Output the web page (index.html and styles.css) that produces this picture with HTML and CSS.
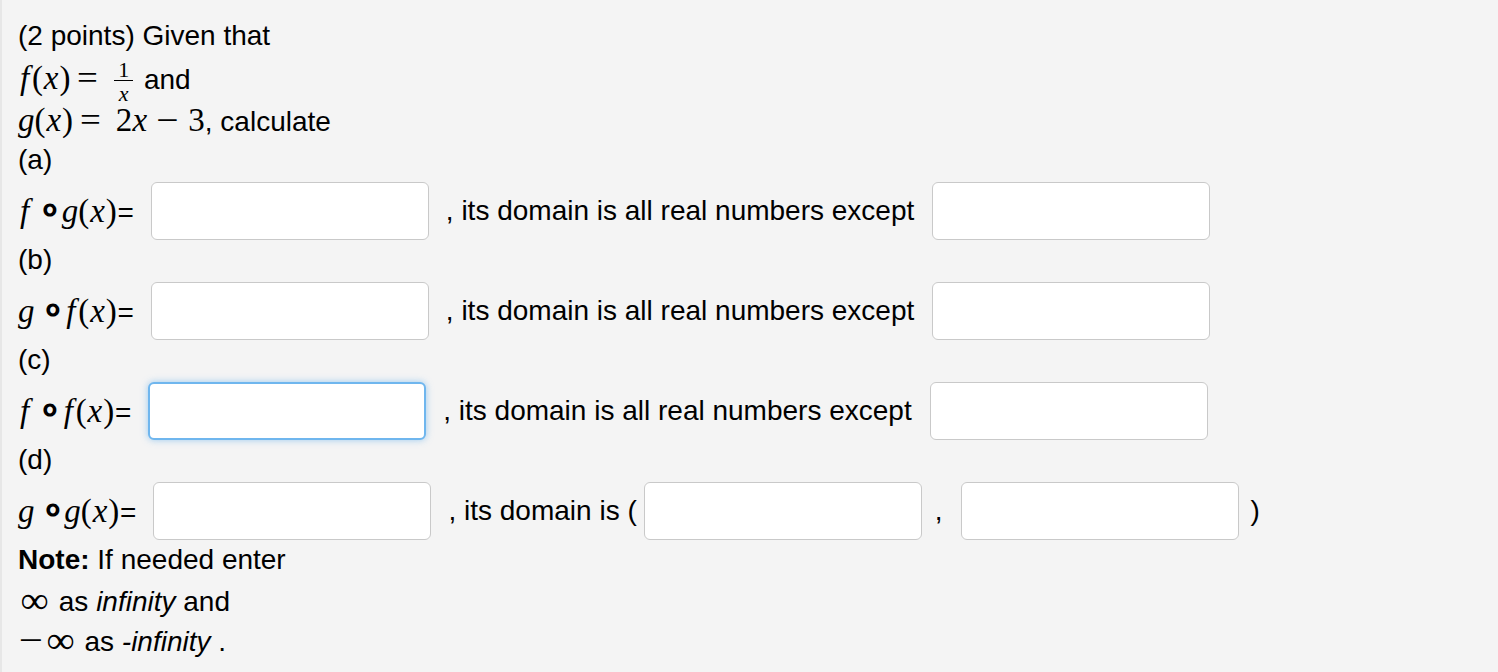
FILE: index.html
```html
<!DOCTYPE html>
<html lang="en">
<head>
<meta charset="utf-8">
<title>Composition of functions</title>
<link rel="stylesheet" href="styles.css">
</head>
<body>
<div class="page">
  <div class="line">(2 points) Given that</div>
  <div class="line l2"><span class="math"><i class="mi f">f</i><span class="mo p">(</span><i class="mi x">x</i><span class="mo p">)</span><span class="mo rel">=</span><span class="frac"><span class="num">1</span><i class="den">x</i></span></span> and</div>
  <div class="line"><span class="math"><i class="mi g">g</i><span class="mo p">(</span><i class="mi x">x</i><span class="mo p">)</span><span class="mo rel">=</span><span class="mo d">2</span><i class="mi x">x</i><span class="mo bin">−</span><span class="mo d">3</span></span>, calculate</div>

  <div class="line">(a)</div>
  <div class="row">
    <span class="lbl"><span class="math"><i class="mi f">f</i><span class="mo circ">∘</span><i class="mi g">g</i><span class="mo p">(</span><i class="mi x">x</i><span class="mo p">)</span></span>=</span>
    <input class="ans ans-first" type="text">
    <span class="txt">, its domain is all real numbers except</span>
    <input class="ans ans-end" type="text">
  </div>

  <div class="line">(b)</div>
  <div class="row">
    <span class="lbl"><span class="math"><i class="mi g">g</i><span class="mo circ">∘</span><i class="mi f">f</i><span class="mo p">(</span><i class="mi x">x</i><span class="mo p">)</span></span>=</span>
    <input class="ans ans-first" type="text">
    <span class="txt">, its domain is all real numbers except</span>
    <input class="ans ans-end" type="text">
  </div>

  <div class="line">(c)</div>
  <div class="row">
    <span class="lbl"><span class="math"><i class="mi f">f</i><span class="mo circ">∘</span><i class="mi f">f</i><span class="mo p">(</span><i class="mi x">x</i><span class="mo p">)</span></span>=</span>
    <input class="ans ans-first focused" type="text">
    <span class="txt">, its domain is all real numbers except</span>
    <input class="ans ans-end" type="text">
  </div>

  <div class="line">(d)</div>
  <div class="row">
    <span class="lbl"><span class="math"><i class="mi g">g</i><span class="mo circ">∘</span><i class="mi g">g</i><span class="mo p">(</span><i class="mi x">x</i><span class="mo p">)</span></span>=</span>
    <input class="ans ans-first" type="text">
    <span class="txt">, its domain is (</span>
    <input class="ans ans-open" type="text">
    <span class="sep">,</span>
    <input class="ans ans-last" type="text">
    <span class="close">)</span>
  </div>

  <div class="line"><b>Note:</b> If needed enter</div>
  <div class="line"><span class="math"><span class="mo inf">∞</span></span> as <i>infinity</i> and</div>
  <div class="line"><span class="math"><span class="mo minus">−</span><span class="mo inf">∞</span></span> as <i>-infinity</i> .</div>
</div>
</body>
</html>
```
FILE: styles.css
```css
html, body {
  margin: 0;
  padding: 0;
}

body {
  background: #f4f4f4;
  color: #000;
  font-family: "Liberation Sans", Arial, Helvetica, sans-serif;
  font-size: 28px;
}

.page {
  box-sizing: border-box;
  min-height: 672px;
  border-left: 2px solid #e7e7e7;
  padding: 16px 0 0 16px;
}

.line {
  height: 40px;
  line-height: 40px;
  white-space: nowrap;
}

.l2 {
  height: 44px;
  line-height: 44px;
}

.math {
  font-family: "Liberation Serif", "Times New Roman", serif;
  font-size: 33px;
  font-style: normal;
  white-space: nowrap;
}

.mi,
.mo {
  display: inline-block;
  text-align: center;
  line-height: 1;
}

.mi {
  font-style: italic;
}

.mo {
  font-style: normal;
}

.f { width: 13.2px; }
.g { width: 15.8px; }
.x { width: 15px; }
.p { width: 12.5px; }
.d { width: 16.5px; }

.rel {
  width: 25px;
  margin: 0 13px 0 4px;
  transform: scaleX(1.12);
}

.bin {
  width: 25px;
  margin: 0 8px;
  transform: scaleX(1.2);
}

.circ {
  width: 16.5px;
  margin: 0 7px;
  font-size: 1.15em;
  font-weight: bold;
  vertical-align: -1px;
}

.minus {
  width: 25.7px;
  transform: scaleX(1.3);
}

.inf {
  width: 33px;
  transform: scale(1.2, 1.15);
}

.frac {
  display: inline-block;
  vertical-align: -12.4px;
  text-align: center;
  font-size: 22px;
  margin: 0 3px 0 1px;
}

.num {
  display: block;
  line-height: 20px;
  border-bottom: 1.3px solid #000;
  padding: 0 4px;
}

.den {
  display: block;
  line-height: 26.2px;
  font-style: italic;
}

.row {
  box-sizing: border-box;
  height: 60px;
  padding-top: 2px;
  display: flex;
  align-items: center;
  white-space: nowrap;
}

.ans {
  box-sizing: border-box;
  width: 278px;
  height: 58px;
  margin: 0;
  padding: 0 10px;
  border: 1px solid #c9c9c9;
  border-radius: 6px;
  background: #fff;
  font: inherit;
  outline: none;
}

.ans.focused {
  border: 2px solid #6fb6ee;
  box-shadow: 0 0 7px rgba(82, 168, 236, 0.55);
}

.ans-first {
  margin-left: 17px;
}

.txt {
  margin-left: 17px;
}

.ans-end {
  margin-left: 18px;
}

.ans-open {
  margin-left: 7px;
}

.sep {
  margin: 0 18px 0 13px;
}

.close {
  margin-left: 12px;
}
```
